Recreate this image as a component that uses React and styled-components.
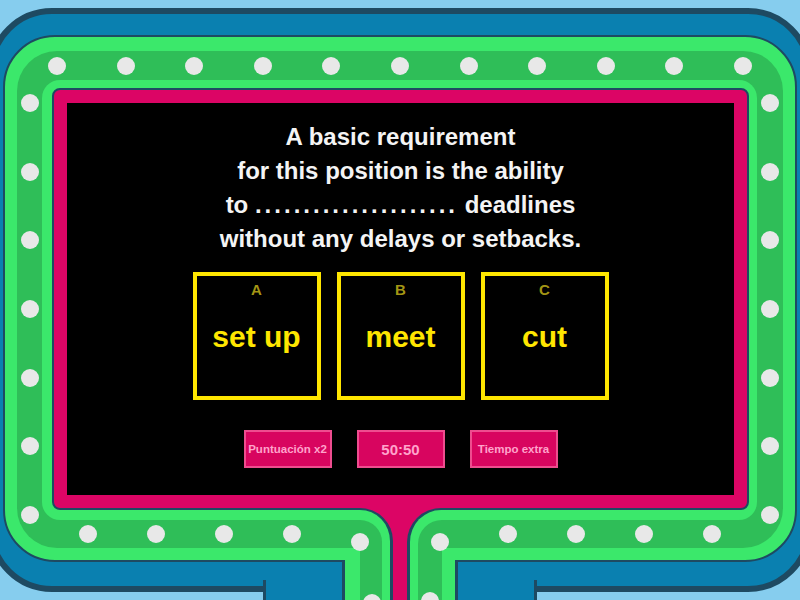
import React from 'react';
import styled, { createGlobalStyle, css } from 'styled-components';

const NAVY = '#1e4a62';
const BLUE = '#0a80b0';
const SKY = '#86cdee';
const GREEN = '#3be86b';
const DARK_GREEN = '#2fbe58';
const PINK = '#dc0565';
const YELLOW = '#ffe600';

const GlobalStyle = createGlobalStyle`
    html, body {
        margin: 0;
        padding: 0;
        background: ${SKY};
    }
    * {
        box-sizing: border-box;
    }
`;

// 1. Page / cabinet
const Page = styled.div`
    position: relative;
    width: 800px;
    height: 600px;
    overflow: hidden;
    background: ${SKY};
    font-family: 'Liberation Sans', Arial, sans-serif;
`;

const Cabinet = styled.div`
    width: 824px;
    height: 584px;
    margin: 8px 0 0 -12px;
    padding: 21px 9px 24px;
    border: 6px solid ${NAVY};
    border-radius: 64px;
    background: ${BLUE};
`;

// foot of the cabinet under the screen (lies over the cabinet edge)
const CabinetFoot = styled.div`
    position: absolute;
    left: 263px;
    top: 580px;
    width: 274px;
    height: 20px;
    background: ${BLUE};
    border-left: 3px solid ${NAVY};
    border-right: 3px solid ${NAVY};
`;

// 2. Green light frame
const LightFrame = styled.div`
    height: 100%;
    padding: 14px 12px 12px;
    border: 2px solid ${NAVY};
    border-radius: 52px;
    background: ${GREEN};
`;

const LightRing = styled.div`
    height: 100%;
    display: grid;
    grid-template-columns: 25px 1fr 26px;
    grid-template-rows: 29px 1fr 28px;
    border-radius: 40px;
    background: ${DARK_GREEN};
`;

const Bulb = styled.span`
    display: block;
    width: 18px;
    height: 18px;
    border-radius: 50%;
    background: #e8e8e8;
    flex: none;

    ${(props) =>
        props.$at &&
        css`
            position: absolute;
            left: ${props.$at[0] - 9}px;
            top: ${props.$at[1] - 9}px;
        `}
`;

const BulbColumn = styled.div`
    grid-row: 1 / 4;
    grid-column: ${(props) => (props.side === 'right' ? 3 : 1)};
    display: flex;
    flex-direction: column;
    justify-content: space-between;
    align-items: center;
    padding: 43px 0 24px;
`;

const BulbRow = styled.div`
    grid-column: 2;
    grid-row: ${(props) => (props.side === 'bottom' ? 3 : 1)};
    display: flex;
    justify-content: space-between;
    align-items: center;
    padding: ${(props) => (props.side === 'bottom' ? '0 36px 0 37px' : '0 5px 0 6px')};
`;

const BulbGroup = styled.div`
    display: flex;
    gap: 50px;
`;

const InnerRim = styled.div`
    grid-column: 2;
    grid-row: 2;
    padding: 8px 8px 10px 10px;
    border-radius: 18px;
    background: ${GREEN};
`;

const PinkFrame = styled.div`
    height: 100%;
    padding: 13px;
    border: 2px solid ${NAVY};
    border-radius: 8px;
    background: ${PINK};
`;

// 3. Stand (neck under the screen)
const StandBase = styled.div`
    position: absolute;
    left: 342px;
    top: 560px;
    width: 116px;
    height: 40px;
    background: ${GREEN};
    border-left: 3px solid ${NAVY};
    border-right: 3px solid ${NAVY};
`;

const Stand = styled.div`
    position: absolute;
    left: 360px;
    top: 508px;
    width: 82px;
    height: 92px;
    display: flex;
    gap: 14px;
    background: ${PINK};
`;

const Leg = styled.div`
    height: 100%;
    background: ${GREEN};
    border-top: 2px solid ${NAVY};

    ${(props) =>
        props.side === 'left'
            ? css`
                  width: 33px;
                  padding: 10px 8px 0 0;
                  border-right: 3px solid ${NAVY};
                  border-top-right-radius: 34px;
              `
            : css`
                  width: 35px;
                  padding: 10px 0 0 8px;
                  border-left: 3px solid ${NAVY};
                  border-top-left-radius: 34px;
              `}
`;

const LegBand = styled.div`
    height: 100%;
    background: ${DARK_GREEN};
    ${(props) =>
        props.side === 'left'
            ? css`border-top-right-radius: 24px;`
            : css`border-top-left-radius: 24px;`}
`;

// 4. Screen content
const Screen = styled.div`
    height: 100%;
    display: flex;
    flex-direction: column;
    align-items: center;
    background: #000;
`;

const Question = styled.p`
    margin: 17px 0 0;
    color: #f4f4f4;
    font-size: 24px;
    font-weight: bold;
    line-height: 34px;
    text-align: center;

    span.blank {
        letter-spacing: 3px;
    }
`;

const AnswerRow = styled.div`
    display: flex;
    gap: 16px;
    margin-top: 16px;
`;

const AnswerBox = styled.div`
    width: 128px;
    height: 128px;
    display: flex;
    flex-direction: column;
    align-items: center;
    border: 4px solid ${YELLOW};
    padding-top: 5px;

    span.letter {
        color: #a39514;
        font-size: 15px;
        font-weight: bold;
        line-height: 18px;
    }

    span.answer {
        margin-top: 20px;
        color: ${YELLOW};
        font-size: 30px;
        font-weight: bold;
        line-height: 36px;
    }
`;

const PowerRow = styled.div`
    display: flex;
    gap: 25px;
    margin-top: 30px;
`;

const PowerButton = styled.button`
    width: 88px;
    height: 38px;
    padding: 0;
    border: 2px solid #ee4d8f;
    background: #d8055f;
    color: #ffa3cb;
    font-family: 'Liberation Sans', Arial, sans-serif;
    font-weight: bold;
    font-size: ${(props) => (props.big ? '15px' : '11.5px')};
    white-space: nowrap;
    cursor: pointer;
`;

const answers = [
    { letter: 'A', text: 'set up' },
    { letter: 'B', text: 'meet' },
    { letter: 'C', text: 'cut' },
];

const powerUps = [
    { label: 'Puntuación x2' },
    { label: '50:50', big: true },
    { label: 'Tiempo extra' },
];

const bulbs = (n) => Array.from({ length: n }, (_, i) => <Bulb key={i} />);

const App = () => {
    return (
        <Page>
            <GlobalStyle />
            <Cabinet>
                <LightFrame>
                    <LightRing>
                        <BulbColumn side="left">{bulbs(7)}</BulbColumn>
                        <BulbRow side="top">{bulbs(11)}</BulbRow>
                        <BulbColumn side="right">{bulbs(7)}</BulbColumn>

                        <InnerRim>
                            <PinkFrame>
                                <Screen>
                                    <Question>
                                        A basic requirement
                                        <br />
                                        for this position is the ability
                                        <br />
                                        to <span className="blank">.....................</span> deadlines
                                        <br />
                                        without any delays or setbacks.
                                    </Question>

                                    <AnswerRow>
                                        {answers.map((a) => (
                                            <AnswerBox key={a.letter}>
                                                <span className="letter">{a.letter}</span>
                                                <span className="answer">{a.text}</span>
                                            </AnswerBox>
                                        ))}
                                    </AnswerRow>

                                    <PowerRow>
                                        {powerUps.map((p) => (
                                            <PowerButton key={p.label} big={p.big}>
                                                {p.label}
                                            </PowerButton>
                                        ))}
                                    </PowerRow>
                                </Screen>
                            </PinkFrame>
                        </InnerRim>

                        <BulbRow side="bottom">
                            <BulbGroup>{bulbs(4)}</BulbGroup>
                            <BulbGroup>{bulbs(4)}</BulbGroup>
                        </BulbRow>
                    </LightRing>
                </LightFrame>
            </Cabinet>

            <CabinetFoot />
            <StandBase />
            <Stand>
                <Leg side="left">
                    <LegBand side="left" />
                </Leg>
                <Leg side="right">
                    <LegBand side="right" />
                </Leg>
                <Bulb $at={[0, 34]} />
                <Bulb $at={[12, 95]} />
                <Bulb $at={[80, 34]} />
                <Bulb $at={[70, 93]} />
            </Stand>
        </Page>
    );
};

export default App;
